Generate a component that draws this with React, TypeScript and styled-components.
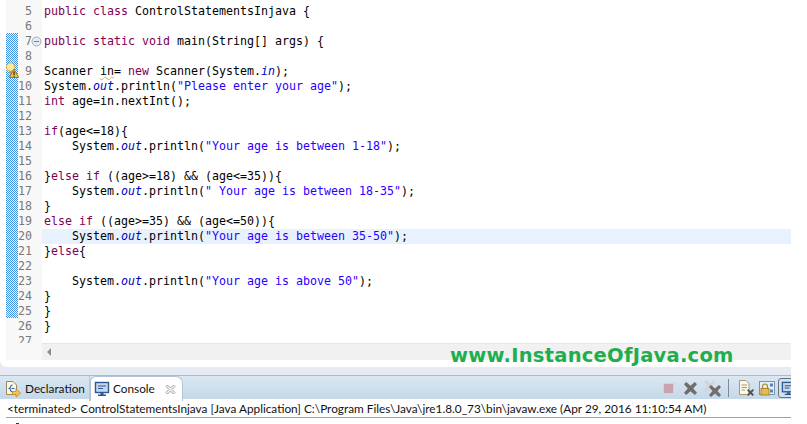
import styled, { createGlobalStyle } from "styled-components";

const GlobalStyle = createGlobalStyle`
    html, body {
        margin: 0;
        padding: 0;
        background: #ffffff;
    }
`;

const Frame = styled.div`
    position: relative;
    width: 791px;
    height: 424px;
    overflow: hidden;
    display: flex;
    flex-direction: column;
    background: #e6eaf3;
`;

const EditorPanel = styled.div`
    height: 367px;
    flex-shrink: 0;
    box-sizing: border-box;
    padding: 0 0 7px 6px;
    background: #ffffff;
    border-bottom-left-radius: 7px;
    display: flex;
    flex-direction: column;
`;

const EditorBody = styled.div`
    height: 343px;
    display: flex;
    overflow: hidden;
`;

const Ruler = styled.div`
    width: 12px;
    flex-shrink: 0;
    padding-top: 33px;
    background: #f8f8f8;
`;

const Hatch = styled.div`
    height: 285px;
    background-color: #ffffff;
    background-image: repeating-conic-gradient(#3f93e6 0 25%, #ffffff 0 50%);
    background-size: 2px 2px;
`;

const Gutter = styled.div`
    width: 24px;
    flex-shrink: 0;
    padding-top: 4px;
    background: #f8f8f8;
`;

const LineNumber = styled.div`
    position: relative;
    height: 15px;
    padding-right: 10px;
    text-align: right;
    font: 11.63px/15px "DejaVu Sans Mono", monospace;
    color: #787878;
`;

const FoldMarker = styled.svg`
    position: absolute;
    top: 2px;
    right: 0;
`;

const MarkerIcon = styled.svg`
    position: absolute;
    top: 62px;
    left: 6px;
`;

const Code = styled.div`
    flex: 1;
    min-width: 0;
    padding-top: 4px;
    background: #ffffff;
`;

const CodeLine = styled.div<{ $current?: boolean }>`
    height: 15px;
    padding-left: 2px;
    white-space: pre;
    font: 11.63px/15px "DejaVu Sans Mono", monospace;
    color: #000000;
    background: ${(p) => (p.$current ? "#e8f2fe" : "transparent")};
`;

const Keyword = styled.span`
    color: #7f0055;
`;

const Str = styled.span`
    color: #2a00ff;
`;

const Field = styled.span`
    color: #0000c0;
    font-style: italic;
`;

const Squiggle = styled.span`
    text-decoration: underline wavy #d9b53c 1px;
    text-underline-offset: 1px;
`;

const Scrollbar = styled.div`
    height: 17px;
    display: flex;
`;

const ScrollCorner = styled.div`
    width: 36px;
    background: #f8f8f8;
`;

const ScrollTrack = styled.div`
    flex: 1;
    display: flex;
    align-items: center;
    padding-left: 5px;
    background: #f1f1f1;
    border-top: 1px solid #e6e6e6;
`;

const ScrollArrow = styled.div`
    width: 0;
    height: 0;
    border-top: 4px solid transparent;
    border-bottom: 4px solid transparent;
    border-right: 4px solid #8c8c8c;
`;

const Watermark = styled.div`
    position: absolute;
    left: 450px;
    top: 344px;
    font: bold 19.5px/24px "DejaVu Sans", sans-serif;
    letter-spacing: 0.25px;
    color: #1fae4f;
    white-space: nowrap;
`;

const Band = styled.div`
    height: 8px;
    flex-shrink: 0;
    background: #e6eaf3;
    border-bottom: 1px solid #aeb9cc;
`;

const TabBar = styled.div`
    height: 24px;
    flex-shrink: 0;
    display: flex;
    background: linear-gradient(#dbe7f3, #c4d7e8);
`;

const Tab = styled.div<{ $active?: boolean }>`
    box-sizing: border-box;
    height: 25px;
    width: ${(p) => (p.$active ? "93px" : "90px")};
    display: flex;
    align-items: center;
    gap: ${(p) => (p.$active ? "3px" : "4px")};
    padding-left: ${(p) => (p.$active ? "3px" : "5px")};
    font: 11.8px/16px Lato, sans-serif;
    color: #111111;
    background: ${(p) => (p.$active ? "#ffffff" : "transparent")};
    border-top-left-radius: ${(p) => (p.$active ? "6px" : "0")};
    border-top-right-radius: ${(p) => (p.$active ? "7px" : "0")};
    border: ${(p) => (p.$active ? "1px solid #b3c3d6" : "none")};
    border-bottom: none;
    border-right: ${(p) => (p.$active ? "1px solid #b3c3d6" : "1px solid #b8c8da")};
    z-index: 1;
`;

const CloseIcon = styled.svg`
    margin-left: 7px;
`;

const Toolbar = styled.div`
    margin-left: auto;
    margin-right: -7px;
    display: flex;
    align-items: center;
`;

const ToolButton = styled.div<{ $width: number; $active?: boolean }>`
    box-sizing: border-box;
    width: ${(p) => p.$width}px;
    height: 20px;
    display: flex;
    align-items: center;
    justify-content: center;
    border-radius: 3px;
    border: ${(p) => (p.$active ? "1px solid #68737f" : "none")};
    background: ${(p) => (p.$active ? "#d5e2ee" : "transparent")};
`;

const ToolSeparator = styled.div`
    width: 1px;
    height: 18px;
    margin: 0 7px 0 5px;
    background: #7f8a96;
`;

const ConsoleHeader = styled.div`
    height: 19px;
    flex-shrink: 0;
    box-sizing: border-box;
    margin-top: -1px;
    padding-left: 6px;
    background: #ffffff;
`;

const HeaderText = styled.div`
    height: 18px;
    padding-left: 1px;
    border-bottom: 1px solid #a0a0a0;
    font: 11.8px/19px Lato, sans-serif;
    white-space: nowrap;
    color: #111111;
`;

const Output = styled.div`
    flex: 1;
    padding: 5px 0 0 16px;
    background: #ffffff;
`;

const Caret = styled.div`
    width: 3px;
    height: 1px;
    background: #333333;
`;

type Part = string | { k: "kw" | "str" | "field" | "warn"; t: string };
const kw = (t: string): Part => ({ k: "kw", t });
const str = (t: string): Part => ({ k: "str", t });
const field = (t: string): Part => ({ k: "field", t });
const warn = (t: string): Part => ({ k: "warn", t });

const println = (indent: string, text: string): Part[] => [
    indent + "System.",
    field("out"),
    ".println(",
    str(text),
    ");",
];

const lines: Part[][] = [
    [kw("public class"), " ControlStatementsInjava {"],
    [],
    [kw("public static void"), " main(String[] args) {"],
    [],
    ["Scanner ", warn("in"), "= ", kw("new"), " Scanner(System.", field("in"), ");"],
    println("", '"Please enter your age"'),
    [kw("int"), " age=in.nextInt();"],
    [],
    [kw("if"), "(age<=18){"],
    println("    ", '"Your age is between 1-18"'),
    [],
    ["}", kw("else if"), " ((age>=18) && (age<=35)){"],
    println("    ", '" Your age is between 18-35"'),
    ["}"],
    [kw("else if"), " ((age>=35) && (age<=50)){"],
    println("    ", '"Your age is between 35-50"'),
    ["}", kw("else"), "{"],
    [],
    println("    ", '"Your age is above 50"'),
    ["}"],
    ["}"],
    ["}"],
    [],
];

const renderPart = (part: Part, i: number) => {
    if (typeof part === "string") return <span key={i}>{part}</span>;
    if (part.k === "kw") return <Keyword key={i}>{part.t}</Keyword>;
    if (part.k === "str") return <Str key={i}>{part.t}</Str>;
    if (part.k === "field") return <Field key={i}>{part.t}</Field>;
    return <Squiggle key={i}>{part.t}</Squiggle>;
};

const BulbWarning = () => (
    <MarkerIcon width="13" height="16" viewBox="0 0 13 16">
        <circle cx="4.5" cy="5" r="4.2" fill="#fbe9a0" stroke="#d8b04a" />
        <rect x="3" y="9" width="3" height="3" fill="#c9a24a" />
        <path d="M8 7 L12.8 15.5 L3.4 15.5 Z" fill="#f2c14a" stroke="#8a5a10" strokeWidth="0.8" />
        <rect x="7.5" y="9.5" width="1.2" height="3.5" fill="#3a2a10" />
        <rect x="7.5" y="13.6" width="1.2" height="1.2" fill="#3a2a10" />
    </MarkerIcon>
);

const DeclarationIcon = () => (
    <svg width="16" height="18" viewBox="0 0 16 18">
        <path d="M1.5 1.5 H8 L11.5 5 V14.5 H1.5 Z" fill="#fbf6e4" stroke="#9c8a58" />
        <path d="M7.5 5 C5 5 6 8 4.5 8.5 C6 9 5 12 7.5 12" fill="none" stroke="#2a62b0" strokeWidth="1.2" />
        <path d="M6.5 8.5 H9.5" stroke="#2a62b0" strokeWidth="1" />
        <path d="M7.5 11.5 H11 V9 L15.5 13 L11 17 V14.5 H7.5 Z" fill="#f2c450" stroke="#b98a20" strokeWidth="0.8" />
    </svg>
);

const MonitorIcon = ({ size = 16 }: { size?: number }) => (
    <svg width={size} height={size} viewBox="0 0 16 16">
        <rect x="1.5" y="1.5" width="13" height="10" fill="#c8d8ea" stroke="#2a5a94" strokeWidth="1.4" />
        <path d="M4 5 H12 M4 7.5 H9" stroke="#2a5a94" strokeWidth="1.2" />
        <path d="M6.5 12 H9.5 V13.5 H12 V15 H4 V13.5 H6.5 Z" fill="#2a5a94" />
    </svg>
);

const GrayCross = ({ x = 0, y = 0, fill = "#6e6e6e" }: { x?: number; y?: number; fill?: string }) => (
    <path
        transform={`translate(${x} ${y})`}
        d="M2 0 L6 3.5 L10 0 L12 2 L8.5 6 L12 10 L10 12 L6 8.5 L2 12 L0 10 L3.5 6 L0 2 Z"
        fill={fill}
    />
);

const App = () => (
    <Frame>
        <GlobalStyle />
        <EditorPanel>
            <EditorBody>
                <Ruler>
                    <Hatch />
                </Ruler>
                <Gutter>
                    {lines.map((_, i) => (
                        <LineNumber key={i}>
                            {i + 5}
                            {i === 2 && (
                                <FoldMarker width="11" height="11" viewBox="0 0 11 11">
                                    <circle cx="5.5" cy="5.5" r="4.5" fill="#e4ecf2" stroke="#9fb0bd" />
                                    <path d="M3 5.5 H8" stroke="#6f8494" />
                                </FoldMarker>
                            )}
                        </LineNumber>
                    ))}
                </Gutter>
                <Code>
                    {lines.map((parts, i) => (
                        <CodeLine key={i} $current={i === 15}>
                            {parts.map(renderPart)}
                        </CodeLine>
                    ))}
                </Code>
            </EditorBody>
            <Scrollbar>
                <ScrollCorner />
                <ScrollTrack>
                    <ScrollArrow />
                </ScrollTrack>
            </Scrollbar>
        </EditorPanel>
        <BulbWarning />
        <Watermark>www.InstanceOfJava.com</Watermark>
        <Band />
        <TabBar>
            <Tab>
                <DeclarationIcon />
                Declaration
            </Tab>
            <Tab $active>
                <MonitorIcon />
                Console
                <CloseIcon width="11" height="11" viewBox="0 0 11 11">
                    <path
                        d="M1 2.5 L2.5 1 L5.5 4 L8.5 1 L10 2.5 L7 5.5 L10 8.5 L8.5 10 L5.5 7 L2.5 10 L1 8.5 L4 5.5 Z"
                        fill="#f4f4f4"
                        stroke="#8a8a8a"
                        strokeWidth="0.8"
                    />
                </CloseIcon>
            </Tab>
            <Toolbar>
                <ToolButton $width={22}>
                    <svg width="11" height="11" viewBox="0 0 11 11">
                        <rect x="0.5" y="0.5" width="10" height="10" fill="#c9a3ab" stroke="#dcd0d0" />
                    </svg>
                </ToolButton>
                <ToolButton $width={22}>
                    <svg width="13" height="13" viewBox="0 0 12 12">
                        <GrayCross />
                    </svg>
                </ToolButton>
                <ToolButton $width={22}>
                    <svg width="17" height="17" viewBox="0 0 17 17">
                        <GrayCross fill="#d4d4d4" />
                        <GrayCross x={5} y={5} />
                    </svg>
                </ToolButton>
                <ToolSeparator />
                <ToolButton $width={20}>
                    <svg width="16" height="16" viewBox="0 0 16 16">
                        <path d="M1.5 0.5 H8 L11 3.5 V14.5 H1.5 Z" fill="#fbf8ec" stroke="#a89a70" />
                        <path d="M3.5 5 H9 M3.5 7.5 H9 M3.5 10 H7" stroke="#a89a70" />
                        <path transform="translate(9 9) scale(0.58)" d="M2 0 L6 3.5 L10 0 L12 2 L8.5 6 L12 10 L10 12 L6 8.5 L2 12 L0 10 L3.5 6 L0 2 Z" fill="#555555" />
                    </svg>
                </ToolButton>
                <ToolButton $width={22}>
                    <svg width="16" height="16" viewBox="0 0 16 16">
                        <rect x="0.5" y="1.5" width="15" height="13" fill="#e6eef6" stroke="#7c93ad" />
                        <rect x="11" y="3.5" width="3" height="3" fill="#5a83b0" />
                        <rect x="11" y="9.5" width="3" height="3" fill="#5a83b0" />
                        <path d="M3.5 9 V6.5 a2.5 2.5 0 0 1 5 0 V9" fill="none" stroke="#a9852c" strokeWidth="1.2" />
                        <rect x="2" y="8.5" width="8" height="6.5" fill="#e8bb4a" stroke="#a9852c" />
                    </svg>
                </ToolButton>
                <ToolButton $width={20} $active>
                    <MonitorIcon size={15} />
                </ToolButton>
            </Toolbar>
        </TabBar>
        <ConsoleHeader>
            <HeaderText>
                {"<terminated> ControlStatementsInjava [Java Application] C:\\Program Files\\Java\\jre1.8.0_73\\bin\\javaw.exe (Apr 29, 2016 11:10:54 AM)"}
            </HeaderText>
        </ConsoleHeader>
        <Output>
            <Caret />
        </Output>
    </Frame>
);

export default App;
